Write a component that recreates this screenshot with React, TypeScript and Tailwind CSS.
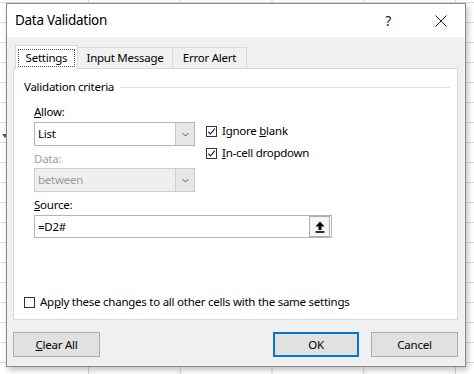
import React from "react";

const F = "[font-family:'Segoe_UI','Noto_Sans',sans-serif]";

function Check({ checked }: { checked?: boolean }) {
  return (
    <span className="flex h-[11px] w-[11px] shrink-0 items-center justify-center border border-[#333] bg-white">
      {checked && (
        <svg width="9" height="9" viewBox="0 0 9 9">
          <path d="M1.2 4.6 L3.5 6.9 L7.9 1.6" fill="none" stroke="#222" strokeWidth="1.1" />
        </svg>
      )}
    </span>
  );
}

function Chevron() {
  return (
    <svg width="7" height="5" viewBox="0 0 7 5">
      <path d="M0.5 1 L3.5 4 L6.5 1" fill="none" stroke="#5a5a5a" strokeWidth="1" />
    </svg>
  );
}

export default function App() {
  return (
    <div
      className={`relative h-[374px] w-[474px] overflow-hidden bg-white ${F} text-[11.5px] tracking-[-0.25px] text-black bg-[linear-gradient(#dcdcdc_1px,transparent_1px),linear-gradient(90deg,#d4d4d4_1px,transparent_1px)] bg-[size:91.75px_20px] bg-[position:88px_2px]`}
    >
      <svg className="absolute left-[2px] top-[133px]" width="6" height="6" viewBox="0 0 6 6">
        <path d="M0 1 L6 1 L3 5 Z" fill="#555" />
      </svg>
      <div className="absolute left-[6px] top-[3px] flex h-[364px] w-[460px] flex-col border border-[#8c8c8c] bg-[#f0f0f0] shadow-[2px_3px_6px_rgba(0,0,0,0.25)]">
        {/* title bar */}
        <div className="flex h-[33px] items-center bg-white pl-[8px] pt-px">
          <span className="text-[13.5px] leading-none tracking-[-0.3px]">Data Validation</span>
          <span className="ml-auto mr-[44px] text-[14px] leading-none text-[#222]">?</span>
          <svg className="mr-[18px]" width="12" height="12" viewBox="0 0 12 12">
            <path d="M0.5 0.5 L11.5 11.5 M11.5 0.5 L0.5 11.5" stroke="#222" strokeWidth="1" />
          </svg>
        </div>

        {/* body */}
        <div className="flex flex-1 flex-col pl-[6px] pr-[7px]">
          <div className="mt-[8px] flex h-[23px] items-end pl-[2px]">
            <div className="relative z-10 -mb-px flex h-[24px] w-[63px] items-center justify-center border border-b-0 border-[#d9d9d9] bg-white">
              <span className="flex h-[18px] w-[57px] items-center justify-center border border-dotted border-[#555]">Settings</span>
            </div>
            <div className="flex h-[21px] w-[95px] items-center justify-center border border-l-0 border-b-0 border-[#d9d9d9] bg-[#f0f0f0]">
              Input Message
            </div>
            <div className="flex h-[21px] w-[74px] items-center justify-center border border-l-0 border-b-0 border-[#d9d9d9] bg-[#f0f0f0]">
              Error Alert
            </div>
          </div>

          <div className="flex h-[252px] flex-col border border-[#d9d9d9] bg-white">
            <div className="mt-[10px] flex h-[16px] items-center pl-[10px] pr-[7px]">
              <span className="leading-[16px]">Validation criteria</span>
              <div className="ml-[6px] h-px flex-1 bg-[#dcdcdc]" />
            </div>

            <div className="mt-[9px] flex pl-[20px]">
              <div className="flex w-[161px] flex-col">
                <span className="leading-[16px]">
                  <span className="underline">A</span>llow:
                </span>
                <div className="mt-[2px] flex h-[24px] items-center border border-[#b4b4b4] bg-white">
                  <span className="flex-1 pl-[3px]">List</span>
                  <div className="flex h-full w-[19px] items-center justify-center border-l border-[#c8c8c8] bg-[#e6e6e6]">
                    <Chevron />
                  </div>
                </div>
                <span className="mt-[5px] leading-[16px] text-[#a0a0a0]">Data:</span>
                <div className="mt-[1px] flex h-[24px] items-center border border-[#cccccc] bg-[#efefef]">
                  <span className="flex-1 pl-[3px] text-[#9a9a9a]">between</span>
                  <div className="flex h-full w-[19px] items-center justify-center border-l border-[#d0d0d0] bg-[#e6e6e6]">
                    <Chevron />
                  </div>
                </div>
              </div>
              <div className="ml-[11px] flex flex-col gap-[6px] pt-[19px]">
                <label className="flex h-[16px] items-center gap-[5px]">
                  <Check checked />
                  <span>
                    Ignore <span className="underline">b</span>lank
                  </span>
                </label>
                <label className="flex h-[16px] items-center gap-[5px]">
                  <Check checked />
                  <span>
                    <span className="underline">I</span>n-cell dropdown
                  </span>
                </label>
              </div>
            </div>

            <div className="mt-[5px] flex flex-col pl-[20px]">
              <span className="leading-[16px]">
                <span className="underline">S</span>ource:
              </span>
              <div className="mt-[2px] flex h-[23px] w-[298px] items-center border border-[#b4b4b4] bg-white">
                <span className="flex-1 pl-[3px]">=D2#</span>
                <div className="mr-px flex h-[21px] w-[21px] items-center justify-center border border-[#b0b0b0] bg-[#f5f5f5]">
                  <svg width="10" height="12" viewBox="0 0 10 12">
                    <path d="M5 0.5 L9.5 5.5 L6.5 5.5 L6.5 9 L3.5 9 L3.5 5.5 L0.5 5.5 Z" fill="#000" />
                    <rect x="0.5" y="10.2" width="9" height="1.6" fill="#000" />
                  </svg>
                </div>
              </div>
            </div>

            <label className="mb-[9px] mt-auto flex h-[16px] items-center gap-[5px] pl-[10px]">
              <Check />
              <span>
                Ap<span className="underline">p</span>ly these changes to all other cells with the same settings
              </span>
            </label>
          </div>

          <div className="mt-[12px] flex h-[25px]">
            <button className="h-[25px] w-[87px] border border-[#adadad] bg-[#e1e1e1]">
              <span className="underline">C</span>lear All
            </button>
            <button className="ml-auto h-[25px] w-[86px] border-2 border-[#0078d7] bg-[#e1e1e1]">OK</button>
            <button className="ml-[12px] h-[25px] w-[87px] border border-[#adadad] bg-[#e1e1e1]">Cancel</button>
          </div>
        </div>
      </div>
    </div>
  );
}
